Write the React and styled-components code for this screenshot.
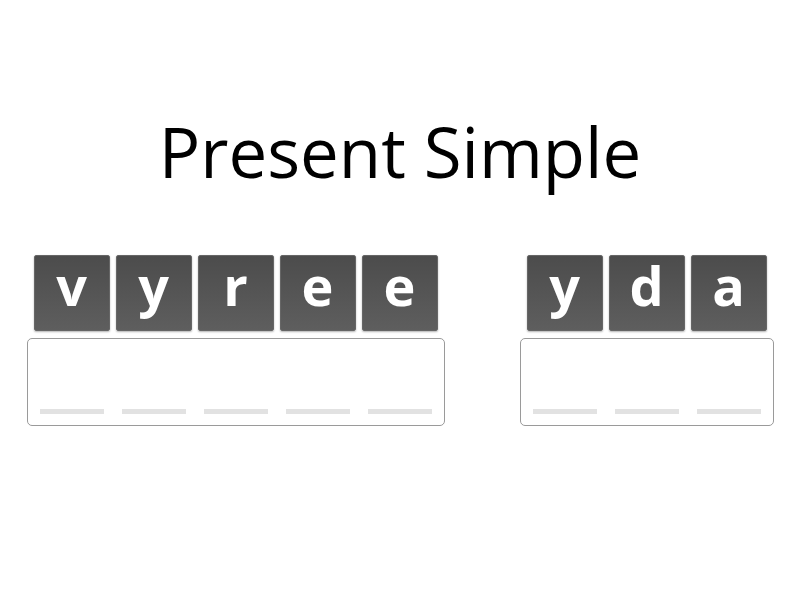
import React from "react";
import styled, { createGlobalStyle } from "styled-components";

const Global = createGlobalStyle`
  html, body { margin: 0; padding: 0; background: #fff; }
  body { font-family: "Open Sans", "Noto Sans", sans-serif; }
`;

const Page = styled.div`
  width: 800px;
  height: 600px;
  display: flex;
  flex-direction: column;
  align-items: center;
`;

const Title = styled.h1`
  margin: 106px 0 0;
  font-family: "Open Sans", sans-serif;
  font-weight: 400;
  font-size: 69px;
  line-height: 90px;
  color: #000;
`;

const Groups = styled.div`
  margin-top: 59px;
  display: flex;
  gap: 75px;
  align-items: flex-start;
`;

const Group = styled.div`
  display: flex;
  flex-direction: column;
  align-items: center;
  gap: 7px;
`;

const Tiles = styled.div`
  display: flex;
  gap: 6px;
`;

const Tile = styled.div`
  width: 76px;
  height: 76px;
  box-sizing: border-box;
  border-radius: 2px;
  border: 1px solid #666;
  background: linear-gradient(#4c4c4c, #5e5e5e);
  box-shadow: 0 1px 2px rgba(0, 0, 0, 0.3);
  color: #fff;
  font-family: "Open Sans", sans-serif;
  font-weight: 700;
  font-size: 54px;
  line-height: 58px;
  display: flex;
  justify-content: center;
`;

const Box = styled.div`
  box-sizing: border-box;
  height: 88px;
  padding: 0 6px 11px;
  border: 1px solid #9a9a9a;
  border-radius: 5px;
  display: flex;
  align-items: flex-end;
  gap: 6px;
`;

const Slot = styled.div`
  width: 76px;
  display: flex;
  justify-content: center;
  &::after {
    content: "";
    width: 64px;
    height: 5px;
    background: #e2e2e2;
  }
`;

const words = [
  ["v", "y", "r", "e", "e"],
  ["y", "d", "a"],
];

export default function App() {
  return (
    <Page>
      <Global />
      <Title>Present Simple</Title>
      <Groups>
        {words.map((w, i) => (
          <Group key={i}>
            <Tiles>
              {w.map((c, j) => (
                <Tile key={j}>{c}</Tile>
              ))}
            </Tiles>
            <Box>
              {w.map((_, j) => (
                <Slot key={j} />
              ))}
            </Box>
          </Group>
        ))}
      </Groups>
    </Page>
  );
}
